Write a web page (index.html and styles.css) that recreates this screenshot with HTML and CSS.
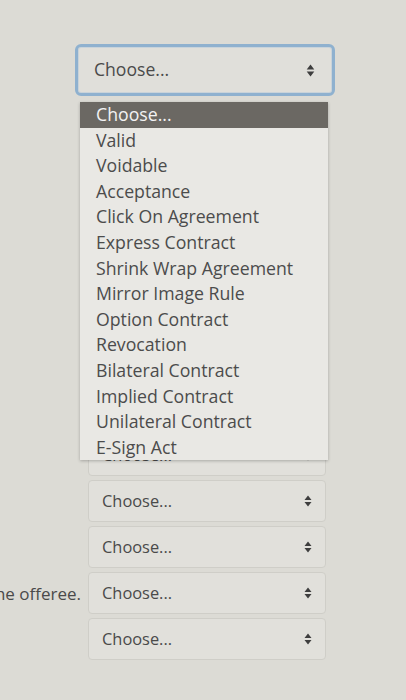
FILE: index.html
```html
<!DOCTYPE html>
<html>
<head>
<meta charset="utf-8">
<link rel="stylesheet" href="styles.css">
</head>
<body>
<div class="page">
  <div class="focus-row">
    <div class="select select-focused">
      <span class="value">Choose...</span>
      <svg class="arrows" viewBox="0 0 8 12" width="9" height="13"><path d="M4 0.5 L7.5 5 H0.5 Z M4 11.5 L7.5 7 H0.5 Z" fill="#3e3e3e"/></svg>
    </div>
    <ul class="menu">
      <li class="active">Choose...</li>
      <li>Valid</li>
      <li>Voidable</li>
      <li>Acceptance</li>
      <li>Click On Agreement</li>
      <li>Express Contract</li>
      <li>Shrink Wrap Agreement</li>
      <li>Mirror Image Rule</li>
      <li>Option Contract</li>
      <li>Revocation</li>
      <li>Bilateral Contract</li>
      <li>Implied Contract</li>
      <li>Unilateral Contract</li>
      <li>E-Sign Act</li>
    </ul>
  </div>
  <div class="rows">
    <div class="row">
      <div class="label"></div>
      <div class="select"><span class="value">Choose...</span><svg class="arrows" viewBox="0 0 8 12" width="8" height="12"><path d="M4 0.5 L7.5 5 H0.5 Z M4 11.5 L7.5 7 H0.5 Z" fill="#3e3e3e"/></svg></div>
    </div>
    <div class="row">
      <div class="label"></div>
      <div class="select"><span class="value">Choose...</span><svg class="arrows" viewBox="0 0 8 12" width="8" height="12"><path d="M4 0.5 L7.5 5 H0.5 Z M4 11.5 L7.5 7 H0.5 Z" fill="#3e3e3e"/></svg></div>
    </div>
    <div class="row">
      <div class="label"></div>
      <div class="select"><span class="value">Choose...</span><svg class="arrows" viewBox="0 0 8 12" width="8" height="12"><path d="M4 0.5 L7.5 5 H0.5 Z M4 11.5 L7.5 7 H0.5 Z" fill="#3e3e3e"/></svg></div>
    </div>
    <div class="row">
      <div class="label"><span>must be communicated to the offeree.</span></div>
      <div class="select"><span class="value">Choose...</span><svg class="arrows" viewBox="0 0 8 12" width="8" height="12"><path d="M4 0.5 L7.5 5 H0.5 Z M4 11.5 L7.5 7 H0.5 Z" fill="#3e3e3e"/></svg></div>
    </div>
    <div class="row">
      <div class="label"></div>
      <div class="select"><span class="value">Choose...</span><svg class="arrows" viewBox="0 0 8 12" width="8" height="12"><path d="M4 0.5 L7.5 5 H0.5 Z M4 11.5 L7.5 7 H0.5 Z" fill="#3e3e3e"/></svg></div>
    </div>
  </div>
</div>
</body>
</html>
```

FILE: styles.css
```css
html, body {
  margin: 0;
  padding: 0;
}
body {
  background: #dcdbd5;
  font-family: "Open Sans", "Liberation Sans", sans-serif;
  color: #4a4a4a;
  width: 406px;
  height: 700px;
  overflow: hidden;
}
.page {
  padding-top: 44px;
}
.focus-row {
  position: relative;
  margin-left: 75px;
  width: 260px;
}
.select {
  display: flex;
  align-items: center;
  justify-content: space-between;
  box-sizing: border-box;
  background: #e1e0db;
  border: 1px solid #cfcec8;
  border-radius: 4px;
  height: 42px;
  padding: 0 13px 0 13px;
  font-size: 16.4px;
}
.select-focused {
  height: 52px;
  border: 3px solid #8fb1cf;
  border-radius: 6px;
  box-shadow: inset 0 0 0 1px #c9d3da;
  padding: 0 17px 0 16px;
  font-size: 17.6px;
  background: #e0dfda;
}
.value {
  line-height: 1;
}
.arrows {
  display: block;
}
.menu {
  position: absolute;
  top: 58px;
  left: 5px;
  width: 248px;
  margin: 0;
  padding: 0;
  list-style: none;
  background: #e9e8e4;
  box-shadow: 0 1px 3px rgba(0,0,0,0.25);
  z-index: 2;
  font-size: 17.7px;
  color: #4c4c4c;
}
.menu li {
  height: 25.6px;
  line-height: 25.6px;
  padding-left: 16px;
  white-space: nowrap;
}
.menu li.active {
  background: #6b6863;
  color: #f3f3f3;
}
.rows {
  display: flex;
  flex-direction: column;
  gap: 4px;
  margin-top: 338px;
}
.row {
  display: grid;
  grid-template-columns: 88px 238px;
  align-items: center;
}
.label {
  display: flex;
  justify-content: flex-end;
  padding-right: 7px;
  white-space: nowrap;
  font-size: 17px;
  color: #4a4a4a;
}
```
